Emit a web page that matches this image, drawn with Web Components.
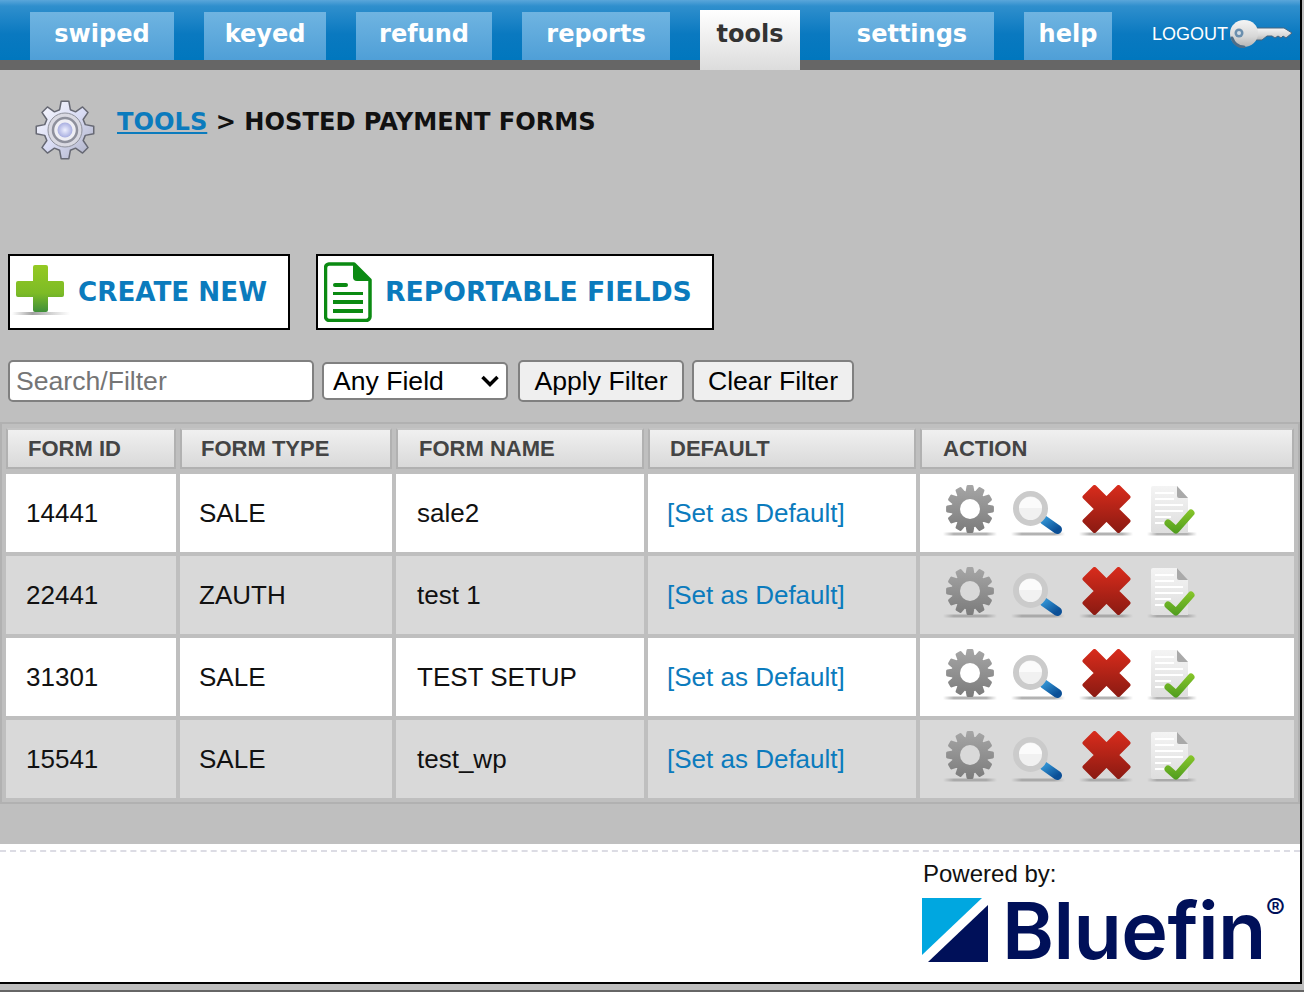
<!DOCTYPE html>
<html lang="en">
<head>
<meta charset="utf-8">
<title>Hosted Payment Forms</title>
<style>
    html, body { margin: 0; padding: 0; background: #666; }
    body { font-family: "Liberation Sans", Arial, sans-serif; height: 992px; overflow: hidden; }
</style>
</head>
<body>
<app-page>
    <top-nav slot="nav">
        <nav-tab w="144">swiped</nav-tab>
        <nav-tab w="122">keyed</nav-tab>
        <nav-tab w="136">refund</nav-tab>
        <nav-tab w="148">reports</nav-tab>
        <nav-tab w="100" active>tools</nav-tab>
        <nav-tab w="164">settings</nav-tab>
        <nav-tab w="88">help</nav-tab>
    </top-nav>
    <bread-crumb></bread-crumb>
    <action-bar>
        <big-button icon="plus" w="282" size="26.2">CREATE NEW</big-button>
        <big-button icon="doc" w="398" size="26.7">REPORTABLE FIELDS</big-button>
    </action-bar>
    <filter-bar></filter-bar>
    <form-table>
        <form-row id-no="14441" type="SALE" name="sale2"></form-row>
        <form-row id-no="22441" type="ZAUTH" name="test 1" alt></form-row>
        <form-row id-no="31301" type="SALE" name="TEST SETUP"></form-row>
        <form-row id-no="15541" type="SALE" name="test_wp" alt></form-row>
    </form-table>
    <page-footer></page-footer>
</app-page>

<script>
// gear outline, used by the breadcrumb and the row icons
function gearPath(cx, cy, outer, inner, teeth, base = 0.36, tip = 0.2) {
    const step = Math.PI * 2 / teeth;
    let d = '';
    for (let i = 0; i < teeth; i++) {
        const a = i * step - Math.PI / 2;
        const pts = [
            [inner, a - step * base],
            [outer, a - step * tip],
            [outer, a + step * tip],
            [inner, a + step * base]
        ];
        pts.forEach((p, n) => {
            const x = (cx + Math.cos(p[1]) * p[0]).toFixed(2);
            const y = (cy + Math.sin(p[1]) * p[0]).toFixed(2);
            d += (i === 0 && n === 0 ? 'M' : 'L') + x + ' ' + y + ' ';
        });
    }
    return d + 'Z';
}

const FLOOR = (w) => `<rect x="0" y="47.5" width="${w}" height="3" fill="url(#floor)"/>`;

const FLOOR_DEF = `<linearGradient id="floor">
        <stop offset="0" stop-color="#999" stop-opacity="0"/>
        <stop offset=".2" stop-color="#999" stop-opacity=".75"/>
        <stop offset=".8" stop-color="#999" stop-opacity=".75"/>
        <stop offset="1" stop-color="#999" stop-opacity="0"/>
    </linearGradient>`;

const ICONS = {
    gear: () => `<svg width="54" height="52" viewBox="0 0 54 52">
        <defs>${FLOOR_DEF}
            <linearGradient id="g" gradientUnits="userSpaceOnUse" x1="0" y1="0" x2="0" y2="48">
                <stop offset="0" stop-color="#a6a6a6"/><stop offset="1" stop-color="#7b7b7b"/>
            </linearGradient></defs>
        ${FLOOR(54)}
        <path d="${gearPath(27, 24, 22.5, 17, 12, 0.34, 0.17)}" fill="url(#g)" stroke="url(#g)" stroke-width="3" stroke-linejoin="round"/>
        <circle cx="27" cy="24" r="10" fill="var(--hole, #fff)"/>
    </svg>`,
    lens: () => `<svg width="54" height="52" viewBox="0 0 54 52">
        <defs>${FLOOR_DEF}
            <linearGradient id="h" x1="0" y1="0" x2="1" y2="1">
                <stop offset="0" stop-color="#2f8fd0"/><stop offset="1" stop-color="#0b4f96"/>
            </linearGradient></defs>
        ${FLOOR(54)}
        <line x1="33" y1="35" x2="46.500" y2="44.500" stroke="url(#h)" stroke-width="9" stroke-linecap="round"/>
        <circle cx="19.500" cy="23.500" r="14.500" fill="#f1f1f1" stroke="#cbcbcb" stroke-width="6"/>
        <path d="M8 23a11.500 11.500 0 0 1 23 0z" fill="#fff" opacity=".7"/>
    </svg>`,
    cross: () => `<svg width="54" height="52" viewBox="0 0 54 52">
        <defs>${FLOOR_DEF}
            <linearGradient id="x" gradientUnits="userSpaceOnUse" x1="0" y1="0" x2="0" y2="48">
                <stop offset="0" stop-color="#d92c1c"/><stop offset="1" stop-color="#8a1a12"/>
            </linearGradient></defs>
        ${FLOOR(54)}
        <polygon points="27.5,14 39.5,2 49.5,12 37.5,24 49.5,36 39.5,46 27.5,34 15.5,46 5.5,36 17.5,24 5.5,12 15.5,2"
            fill="url(#x)" stroke="url(#x)" stroke-width="4" stroke-linejoin="round"/>
    </svg>`,
    sheet: () => `<svg width="50" height="52" viewBox="0 0 50 52">
        <defs>${FLOOR_DEF}
            <linearGradient id="c" gradientUnits="userSpaceOnUse" x1="0" y1="25" x2="0" y2="50">
                <stop offset="0" stop-color="#86c52a"/><stop offset="1" stop-color="#4c9a1e"/>
            </linearGradient>
            <linearGradient id="p" x1="0" y1="0" x2="0" y2="1">
                <stop offset="0" stop-color="#f4f4f4"/><stop offset="1" stop-color="#dedede"/>
            </linearGradient></defs>
        ${FLOOR(50)}
        <path d="M6 1H30L41 13V48H6a2 2 0 0 1-2-2V3a2 2 0 0 1 2-2z" fill="url(#p)"/>
        <path d="M30 1L41 13H32a2 2 0 0 1-2-2z" fill="#a9a9a9"/>
        <path d="M8 8H27M8 14H27M8 20H36M8 26H36M8 32H24M8 38H20" stroke="#fff" stroke-width="2"/>
        <polyline points="21,38 29,45 44,28" fill="none" stroke="url(#c)" stroke-width="7" stroke-linejoin="round" stroke-linecap="round"/>
    </svg>`,
    plus: () => `<svg width="60" height="54" viewBox="0 0 60 54">
        <defs>
            <linearGradient id="s">
                <stop offset="0" stop-color="#888" stop-opacity="0"/>
                <stop offset=".35" stop-color="#777" stop-opacity=".7"/>
                <stop offset="1" stop-color="#888" stop-opacity="0"/>
            </linearGradient>
            <linearGradient id="pl" gradientUnits="userSpaceOnUse" x1="0" y1="0" x2="0" y2="47">
                <stop offset="0" stop-color="#94c923"/><stop offset=".6" stop-color="#7dbb26"/>
                <stop offset="1" stop-color="#3f8f3a"/>
            </linearGradient></defs>
        <rect x="0" y="47" width="58" height="3" fill="url(#s)"/>
        <path d="M21 2a2 2 0 0 1 2-2H34a2 2 0 0 1 2 2V16H50a2 2 0 0 1 2 2V30a2 2 0 0 1-2 2H36V45a2 2 0 0 1-2 2H23a2 2 0 0 1-2-2V32H6a2 2 0 0 1-2-2V18a2 2 0 0 1 2-2H21z" fill="url(#pl)"/>
    </svg>`,
    doc: () => `<svg width="48" height="60" viewBox="0 0 48 60">
        <path d="M5 2H30L46 18V54a4 4 0 0 1-4 4.500H5a4 4 0 0 1-3.500-4.500V5.500A4 4 0 0 1 5 2z" fill="#fff" stroke="#0b8a12" stroke-width="3.500" stroke-linejoin="round"/>
        <path d="M29 1L47 19H33a4 4 0 0 1-4-4z" fill="#0b8a12"/>
        <rect x="9" y="21" width="15" height="4" rx="2" fill="#0b8a12"/>
        <rect x="9" y="30" width="30" height="3" fill="#0b8a12"/>
        <rect x="9" y="38" width="30" height="4" fill="#0b8a12"/>
        <rect x="9" y="47" width="30" height="4" fill="#0b8a12"/>
    </svg>`
};

class AppPage extends HTMLElement {
    constructor() {
        super();
        this.attachShadow({ mode: 'open' });
        this.shadowRoot.innerHTML = `
            <style>
                :host { display: block; width: 1304px; height: 990px; background: #bdbdbd; }
                #frame {
                    width: 1302px;
                    height: 984px;
                    box-sizing: border-box;
                    border-right: 2px solid #000;
                    border-bottom: 2px solid #000;
                    background: #bfbfbf;
                    display: flex;
                    flex-direction: column;
                }
            </style>
            <div id="frame"><slot name="nav"></slot><slot></slot></div>
        `;
    }
}

class TopNav extends HTMLElement {
    constructor() {
        super();
        this.attachShadow({ mode: 'open' });
        this.shadowRoot.innerHTML = `
            <style>
                :host {
                    display: flex;
                    height: 70px;
                    box-sizing: border-box;
                    padding: 0 0 10px 30px;
                    gap: 30px;
                    align-items: flex-end;
                    background: linear-gradient(#5aa6da 0, #2f8fcd 6px, #0a79c0 34px, #0077be 60px, #666 60px, #666 70px);
                }
                #logout {
                    display: flex;
                    align-items: center;
                    height: 48px;
                    margin-left: 10px;
                    color: #fff;
                    font: 18px "Liberation Sans", Arial, sans-serif;
                    padding-bottom: 6px;
                    box-sizing: border-box;
                }
                #logout span { padding-top: 2px; }
                svg { margin-left: 1px; }
            </style>
            <slot></slot>
            <div id="logout"><span>LOGOUT</span>
                <svg width="64" height="30" viewBox="0 0 64 30">
                    <defs>
                        <linearGradient id="k" x1="0" y1="0" x2="0" y2="1">
                            <stop offset="0" stop-color="#f5f5f5"/><stop offset=".6" stop-color="#d8d8d8"/><stop offset="1" stop-color="#b5b5b5"/>
                        </linearGradient>
                    </defs>
                    <path d="M24 10H55L63 15L57 20L54 18L52 20L49 18L46 20L43 18H38L33 22H24z" fill="url(#k)" stroke="#47647f" stroke-width="1"/>
                    <path d="M15 2C24 2 29 8 29 15C29 23 23 29 14 29C6 29 1 23 1 15C1 8 7 2 15 2z" fill="url(#k)"/>
                    <path d="M3 20C5 26 10 29 15 29" fill="none" stroke="#4d6d88" stroke-width="3" stroke-linecap="round"/>
                    <circle cx="10" cy="15" r="4.500" fill="#6b8fae"/>
                    <circle cx="10" cy="15" r="2" fill="#d4dde5"/>
                </svg>
            </div>
        `;
    }
}

class NavTab extends HTMLElement {
    constructor() {
        super();
        this.attachShadow({ mode: 'open' });
        this.shadowRoot.innerHTML = `
            <style>
                :host {
                    display: flex;
                    justify-content: center;
                    align-items: flex-start;
                    box-sizing: border-box;
                    height: 48px;
                    padding-top: 8px;
                    color: #fff;
                    font: bold 24px "DejaVu Sans", Verdana, sans-serif;
                    background: linear-gradient(#6fb4e1, #4f9fd7);
                }
                :host([active]) {
                    height: 60px;
                    margin-bottom: -10px;
                    padding-top: 10px;
                    color: #333;
                    background: linear-gradient(#fff, #dcdcdc);
                }
            </style>
            <slot></slot>
        `;
    }

    connectedCallback() {
        this.style.width = this.getAttribute('w') + 'px';
    }
}

class BreadCrumb extends HTMLElement {
    constructor() {
        super();
        this.attachShadow({ mode: 'open' });
        this.shadowRoot.innerHTML = `
            <style>
                :host {
                    display: flex;
                    height: 184px;
                    box-sizing: border-box;
                    padding: 28px 0 0 35px;
                    font: bold 24.15px "DejaVu Sans", Verdana, sans-serif;
                    color: #111;
                }
                svg { flex: none; }
                #text { margin-left: 22px; margin-top: 10px; }
                a { color: #0b7bbd; }
            </style>
            <svg width="60" height="64" viewBox="0 0 60 64">
                <defs>
                    <linearGradient id="b" x1="0" y1="0" x2="1" y2="1">
                        <stop offset="0" stop-color="#fbfbff"/><stop offset=".5" stop-color="#d9dcf4"/><stop offset="1" stop-color="#a9acc0"/>
                    </linearGradient>
                    <radialGradient id="m"><stop offset="0" stop-color="#eef0ff"/><stop offset="1" stop-color="#a8aee0"/></radialGradient>
                </defs>
                <path d="${gearPath(30, 32, 29, 21, 8, 0.33, 0.17)}" fill="url(#b)" stroke="#666873" stroke-width="1.500" stroke-linejoin="round"/>
                <circle cx="30" cy="32" r="17" fill="#d9d9e2" stroke="#8f919c"/>
                <circle cx="30" cy="32" r="12" fill="#eeeef4" stroke="#8e909c" stroke-width="2.500"/>
                <circle cx="30" cy="32" r="7.500" fill="url(#m)"/>
            </svg>
            <div id="text"><a href="#">TOOLS</a> &gt; HOSTED PAYMENT FORMS</div>
        `;
    }
}

class ActionBar extends HTMLElement {
    constructor() {
        super();
        this.attachShadow({ mode: 'open' });
        this.shadowRoot.innerHTML = `
            <style>
                :host { display: flex; gap: 26px; padding-left: 8px; height: 76px; margin-bottom: 30px; }
            </style>
            <slot></slot>
        `;
    }
}

class BigButton extends HTMLElement {
    constructor() {
        super();
        this.attachShadow({ mode: 'open' });
    }

    connectedCallback() {
        const icon = this.getAttribute('icon');
        this.style.width = this.getAttribute('w') + 'px';
        this.shadowRoot.innerHTML = `
            <style>
                :host {
                    display: flex;
                    align-items: center;
                    box-sizing: border-box;
                    height: 76px;
                    border: 2px solid #000;
                    background: #fff;
                    color: #0b7bbd;
                    font: bold ${this.getAttribute('size')}px/32px "DejaVu Sans", Verdana, sans-serif;
                    padding-left: ${icon === 'plus' ? 2 : 6}px;
                    gap: ${icon === 'plus' ? 6 : 13}px;
                }
                span { display: flex; }
                svg { display: block; }
            </style>
            <span>${ICONS[icon]()}</span><slot></slot>
        `;
    }
}

const CHEVRON = `data:image/svg+xml,` + encodeURIComponent(
    `<svg xmlns="http://www.w3.org/2000/svg" width="18" height="12" viewBox="0 0 18 12"><path d="M1.500 2L9 9.500L16.500 2" fill="none" stroke="#000" stroke-width="3.500"/></svg>`
);

class FilterBar extends HTMLElement {
    constructor() {
        super();
        this.attachShadow({ mode: 'open' });
        this.shadowRoot.innerHTML = `
            <style>
                :host {
                    display: flex;
                    align-items: center;
                    height: 42px;
                    padding-left: 8px;
                    margin-bottom: 20px;
                    font: 26.6px "Liberation Sans", Arial, sans-serif;
                }
                input, select, button { font: inherit; box-sizing: border-box; color: #000; }
                input {
                    width: 306px;
                    height: 42px;
                    border: 2px solid #808080;
                    border-radius: 5px;
                    padding: 0 6px;
                    background: #fff;
                }
                input::placeholder { color: #757575; opacity: 1; }
                select {
                    appearance: none;
                    width: 186px;
                    height: 38px;
                    margin-left: 8px;
                    border: 2px solid #808080;
                    border-radius: 5px;
                    padding-left: 9px;
                    background: #fff url("${CHEVRON}") no-repeat right 7px center;
                }
                button {
                    height: 42px;
                    border: 2px solid #808080;
                    border-radius: 5px;
                    background: #efefef;
                    padding: 0;
                }
                #apply { width: 166px; margin-left: 10px; }
                #clear { width: 162px; margin-left: 8px; }
            </style>
            <input type="text" placeholder="Search/Filter">
            <select><option>Any Field</option></select>
            <button id="apply">Apply Filter</button>
            <button id="clear">Clear Filter</button>
        `;
    }
}

const TABLE_COLS = '170px 212px 248px 268px 374px';

class FormTable extends HTMLElement {
    constructor() {
        super();
        this.attachShadow({ mode: 'open' });
        this.shadowRoot.innerHTML = `
            <style>
                :host {
                    display: flex;
                    flex-direction: column;
                    gap: 4px;
                    box-sizing: border-box;
                    height: 382px;
                    width: 1300px;
                    padding: 4px;
                    border: 2px solid #b1b1b1;
                    background: #bfbfbf;
                }
                #head {
                    display: grid;
                    grid-template-columns: ${TABLE_COLS};
                    gap: 4px;
                    margin-bottom: 1px;
                }
                #head div {
                    box-sizing: border-box;
                    height: 41px;
                    border: 2px solid #b1b1b1;
                    border-top-color: #c4c4c4;
                    background: linear-gradient(#f0f0f0, #d9d9d9);
                    color: #444;
                    font: bold 22px/37px "Liberation Sans", Arial, sans-serif;
                    padding-left: 20px;
                }
                #head div:nth-child(2) { padding-left: 19px; }
                #head div:nth-child(3), #head div:nth-child(5) { padding-left: 21px; }
            </style>
            <div id="head">
                <div>FORM ID</div><div>FORM TYPE</div><div>FORM NAME</div><div>DEFAULT</div><div>ACTION</div>
            </div>
            <slot></slot>
        `;
    }
}

class FormRow extends HTMLElement {
    constructor() {
        super();
        this.attachShadow({ mode: 'open' });
    }

    connectedCallback() {
        this.shadowRoot.innerHTML = `
            <style>
                :host {
                    display: grid;
                    grid-template-columns: ${TABLE_COLS};
                    gap: 4px;
                    height: 78px;
                    color: #111;
                    font: 26px "Liberation Sans", Arial, sans-serif;
                    --cell: #fff;
                    --hole: #fff;
                }
                :host([alt]) { --cell: #d9d9d9; --hole: #d9d9d9; }
                .cell {
                    display: flex;
                    align-items: center;
                    padding-left: 20px;
                    background: var(--cell);
                }
                #type, #def { padding-left: 19px; }
                #name { padding-left: 21px; }
                a { color: #0b7bbd; text-decoration: none; }
                #actions { padding: 0 0 4px 23px; gap: 14px; }
                svg { display: block; flex: none; }
            </style>
            <div class="cell">${this.getAttribute('id-no')}</div>
            <div class="cell" id="type">${this.getAttribute('type')}</div>
            <div class="cell" id="name">${this.getAttribute('name')}</div>
            <div class="cell" id="def"><a href="#">[Set as Default]</a></div>
            <div class="cell" id="actions">${ICONS.gear()}${ICONS.lens()}${ICONS.cross()}${ICONS.sheet()}</div>
        `;
    }
}

class PageFooter extends HTMLElement {
    constructor() {
        super();
        this.attachShadow({ mode: 'open' });
        this.shadowRoot.innerHTML = `
            <style>
                :host {
                    display: block;
                    box-sizing: border-box;
                    height: 138px;
                    margin-top: 40px;
                    background: #fff;
                    padding-top: 6px;
                }
                #rule { height: 0; border-top: 2px dashed #dcdce4; }
                #credit { margin-left: 922px; padding-top: 8px; }
                #by { font: 24px/28px "Liberation Sans", Arial, sans-serif; color: #111; margin-left: 1px; }
                #logo { display: flex; align-items: flex-start; margin-top: 10px; color: #001059; }
                #name { font: 600 79px/64px Inter, Roboto, "Liberation Sans", sans-serif; margin-left: 14px; letter-spacing: -.6px; }
                sup { font: 400 29px/28px Inter, Roboto, sans-serif; margin-top: -3px; }
                svg { display: block; flex: none; }
            </style>
            <div id="rule"></div>
            <div id="credit">
                <div id="by">Powered by:</div>
                <div id="logo">
                    <svg width="66" height="64" viewBox="0 0 66 64">
                        <polygon points="0,0 60,0 0,57" fill="#00a7e0"/>
                        <polygon points="66,7 66,64 6,64" fill="#001059"/>
                    </svg>
                    <span id="name">Bluefin</span><sup>®</sup>
                </div>
            </div>
        `;
    }
}

customElements.define('app-page', AppPage);
customElements.define('top-nav', TopNav);
customElements.define('nav-tab', NavTab);
customElements.define('bread-crumb', BreadCrumb);
customElements.define('action-bar', ActionBar);
customElements.define('big-button', BigButton);
customElements.define('filter-bar', FilterBar);
customElements.define('form-table', FormTable);
customElements.define('form-row', FormRow);
customElements.define('page-footer', PageFooter);
</script>
</body>
</html>
